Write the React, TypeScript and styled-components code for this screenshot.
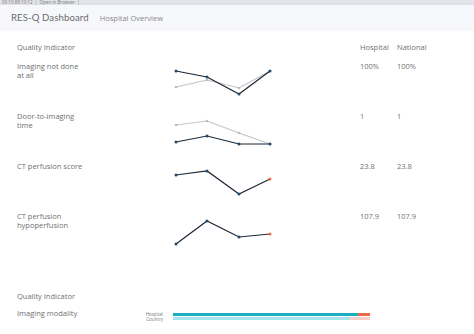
import styled, { createGlobalStyle } from 'styled-components';

const GlobalStyle = createGlobalStyle`
  body {
    margin: 0;
    background: #fff;
    font-family: "Open Sans", "Liberation Sans", sans-serif;
    color: #6f6f6f;
  }
`;

type Pt = [number, number];

const XS = [16, 47, 79, 110];

const rows: {
  label: string[];
  hospital: string;
  national: string;
  dark: number[];
  gray?: number[];
  lastOrange?: boolean;
}[] = [
  { label: ['Imaging not done', 'at all'], hospital: '100%', national: '100%', dark: [9, 15, 32, 9], gray: [25, 18, 26, 9] },
  { label: ['Door-to-imaging', 'time'], hospital: '1', national: '1', dark: [30, 24, 32, 32], gray: [13, 9, 21, 32] },
  { label: ['CT perfusion score'], hospital: '23.8', national: '23.8', dark: [13, 9, 32, 17], lastOrange: true },
  { label: ['CT perfusion', 'hypoperfusion'], hospital: '107.9', national: '107.9', dark: [32, 9, 25, 22], lastOrange: true },
];

const TabStrip = styled.div`
  height: 5px;
  background: #e3e4e9;
  overflow: hidden;
  font-size: 4.5px;
  line-height: 5px;
  color: #777;
  padding-left: 2px;
  white-space: nowrap;
`;

const Header = styled.header`
  height: 24px;
  background: #f7f8fb;
  box-shadow: 0 1px 3px rgba(0, 0, 0, 0.06);
  display: flex;
  align-items: center;
  gap: 11px;
  padding-left: 11px;
`;

const Title = styled.div`
  font-family: Lato, "Open Sans", sans-serif;
  font-size: 9.6px;
  color: #6b6b6b;
  letter-spacing: 0.1px;
`;

const Subtitle = styled.div`
  font-size: 7.5px;
  color: #888;
  padding-top: 1px;
`;

const Table = styled.div`
  display: grid;
  grid-template-columns: 143px 200px 37px 60px;
  padding-left: 17px;
  font-size: 7.5px;
  line-height: 9px;
  color: #6f6f6f;
`;

const HeadCell = styled.div`
  height: 33px;
  padding-top: 14px;
  box-sizing: border-box;
`;

const Cell = styled.div`
  height: 50px;
`;

const ChartCell = styled.div`
  height: 50px;
  svg {
    display: block;
  }
`;

const Section = styled.div`
  margin-top: 30px;
  padding-left: 17px;
  font-size: 7.5px;
  line-height: 9px;
  color: #6f6f6f;
`;

const SectionTitle = styled.div`
  margin-bottom: 8px;
`;

const ModalityRow = styled.div`
  display: flex;
  align-items: flex-start;
`;

const ModalityLabel = styled.div`
  width: 126px;
`;

const BarLegend = styled.div`
  width: 20px;
  padding-top: 3px;
  padding-right: 10px;
  font-size: 4.5px;
  line-height: 5px;
  color: #777;
  text-align: right;
`;

const Bars = styled.div`
  padding-top: 4px;
  display: flex;
  flex-direction: column;
  gap: 1.5px;
`;

const Bar = styled.div<{ $main: string; $end: string; $endW: number }>`
  width: 197px;
  height: 2.5px;
  background: linear-gradient(
    to right,
    ${(p) => p.$main} 0,
    ${(p) => p.$main} ${(p) => 197 - p.$endW}px,
    ${(p) => p.$end} ${(p) => 197 - p.$endW}px
  );
`;

function Spark({ dark, gray, lastOrange }: { dark: number[]; gray?: number[]; lastOrange?: boolean }) {
  const d: Pt[] = dark.map((y, i) => [XS[i], y]);
  const g: Pt[] | undefined = gray?.map((y, i) => [XS[i], y]);
  const pts = (a: Pt[]) => a.map((p) => p.join(',')).join(' ');
  return (
    <svg width="200" height="40" viewBox="0 0 200 40">
      {g && (
        <>
          <polyline points={pts(g)} fill="none" stroke="#c4c4c4" strokeWidth="1.1" />
          {g.map(([x, y], i) => (
            <circle key={i} cx={x} cy={y} r="1.3" fill="#bdbdbd" />
          ))}
        </>
      )}
      <polyline points={pts(d)} fill="none" stroke="#1e2733" strokeWidth="1.2" />
      {d.map(([x, y], i) => (
        <circle
          key={i}
          cx={x}
          cy={y}
          r="1.5"
          fill={lastOrange && i === d.length - 1 ? '#ee6a45' : '#1f4a6e'}
        />
      ))}
    </svg>
  );
}

const App = () => {
  return (
    <>
      <GlobalStyle />
      <TabStrip>00:10:88:10:12 &nbsp;|&nbsp; Open in Browser &nbsp;|</TabStrip>
      <Header>
        <Title>RES-Q Dashboard</Title>
        <Subtitle>Hospital Overview</Subtitle>
      </Header>
      <Table>
        <HeadCell>Quality Indicator</HeadCell>
        <HeadCell />
        <HeadCell>Hospital</HeadCell>
        <HeadCell>National</HeadCell>
        {rows.map((r) => (
          <>
            <Cell key={r.label[0] + 'l'}>
              {r.label.map((l) => (
                <div key={l}>{l}</div>
              ))}
            </Cell>
            <ChartCell key={r.label[0] + 'c'}>
              <Spark dark={r.dark} gray={r.gray} lastOrange={r.lastOrange} />
            </ChartCell>
            <Cell key={r.label[0] + 'h'}>{r.hospital}</Cell>
            <Cell key={r.label[0] + 'n'}>{r.national}</Cell>
          </>
        ))}
      </Table>
      <Section>
        <SectionTitle>Quality Indicator</SectionTitle>
        <ModalityRow>
          <ModalityLabel>Imaging modality</ModalityLabel>
          <BarLegend>
            <div>Hospital</div>
            <div>Country</div>
          </BarLegend>
          <Bars>
            <Bar $main="#1aaebf" $end="#ee6a45" $endW={12} />
            <Bar $main="#a6e6ea" $end="#f8cfc8" $endW={20} />
          </Bars>
        </ModalityRow>
      </Section>
    </>
  );
};

export default App;
